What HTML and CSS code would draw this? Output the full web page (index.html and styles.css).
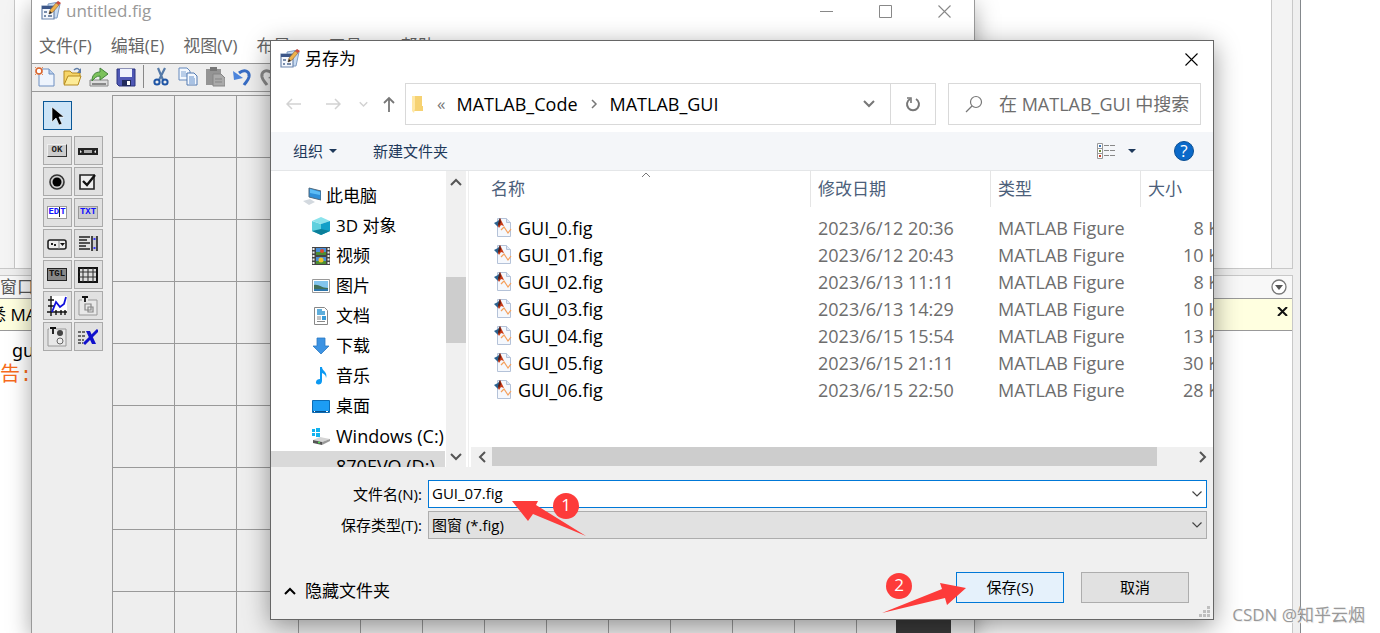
FILE: index.html
```html
<!DOCTYPE html>
<html lang="zh-CN">
<head>
    <meta charset="UTF-8">
    <title>另存为</title>
    <link rel="stylesheet" href="styles.css">
</head>
<body>
    <!-- shared icons -->
    <svg class="defs" width="0" height="0">
        <symbol id="i-guide" viewBox="0 0 20 20">
            <path d="M7 3l11-2 1 2-3 14H8z" fill="#c9dbf1" stroke="#7f9cc4"/>
            <path d="M1 5h12v13H1z" fill="#f4f7fc" stroke="#6d86ad" stroke-width="1.2"/>
            <path d="M1 5h12v3H1z" fill="#3c5688"/>
            <path d="M3 11h3M3 15h2M7 15h4" stroke="#50698f" stroke-width="1.6"/>
            <path d="M8 13l1-4 6-7 3 2-6 7z" fill="#efb24c" stroke="#8b6a46" stroke-width=".7"/>
            <path d="M15 2l2-2 3 2-2 2z" fill="#cf4d3b"/>
            <path d="M8 13l1-3 2 2z" fill="#222"/>
        </symbol>
        <symbol id="i-fig" viewBox="0 0 18 20">
            <path d="M3.500.5h9l4 4v14h-13z" fill="#f5f8fd" stroke="#b4c2d8"/>
            <path d="M12.500.5v4h4" fill="#dfe8f5" stroke="#b4c2d8"/>
            <path d="M7 12l3-3 4 6 3-4" fill="none" stroke="#f5a05c" stroke-width="1.2"/>
            <path d="M0 5l4-2 2-3 1 5-3 4z" fill="#29618f"/>
            <path d="M4 8l2-8 4 8-3-1-2 3z" fill="#c93a16"/>
            <path d="M6 0l1 4-2 4-1-2z" fill="#5a1c15"/>
        </symbol>
        <symbol id="i-down" viewBox="0 0 12 12">
            <path d="M1 3l5 5 5-5" fill="none" stroke="currentColor" stroke-width="2"/>
        </symbol>
        <symbol id="i-thin" viewBox="0 0 12 12">
            <path d="M1.500 3.500L6 8l4.500-4.500" fill="none" stroke="currentColor" stroke-width="1.2"/>
        </symbol>
        <symbol id="i-close" viewBox="0 0 13 13">
            <path d="M.5.5l12 12M12.500.5l-12 12" stroke="currentColor" stroke-width="1.1"/>
        </symbol>
    </svg>

    <div class="desktop">
        <!-- main MATLAB window -->
        <div class="matlab">
            <div class="editor">
                <div class="gutter"></div>
                <div class="code"></div>
                <div class="ruler"></div>
            </div>
            <div class="command">
                <div class="command-title">
                    <span>窗口</span>
                    <svg width="16" height="16" viewBox="0 0 16 16"><circle cx="8" cy="8" r="7" fill="#fff" stroke="#777" stroke-width="1.3"/><path d="M4 6h8l-4 5z" fill="#555"/></svg>
                </div>
                <div class="notice">
                    <span>悉 MATLAB</span>
                    <svg width="11" height="9" viewBox="0 0 11 9"><path d="M1 0l9 9M10 0L1 9" stroke="#111" stroke-width="2"/></svg>
                </div>
                <div class="output">
                    <div class="cmd">guide</div>
                    <div class="warn">告:</div>
                </div>
            </div>
        </div>

        <!-- GUIDE layout editor -->
        <div class="guide">
            <div class="guide-title">
                <svg width="20" height="20"><use href="#i-guide"/></svg>
                <span>untitled.fig</span>
                <div class="win-buttons">
                    <button aria-label="最小化"><svg width="13" height="13"><path d="M0 6.500h13" stroke="#888"/></svg></button>
                    <button aria-label="最大化"><svg width="13" height="13"><path d="M.5.5h12v12H.5z" fill="none" stroke="#888"/></svg></button>
                    <button aria-label="关闭"><svg width="13" height="13"><use href="#i-close"/></svg></button>
                </div>
            </div>
            <div class="guide-menu">
                <button>文件(F)</button>
                <button>编辑(E)</button>
                <button>视图(V)</button>
                <button>布局(L)</button>
                <button>工具(T)</button>
                <button>帮助(H)</button>
            </div>
            <div class="guide-tools">
                <svg viewBox="0 0 20 20"><path d="M4 2h10l5 5v12H4z" fill="#eef4fd" stroke="#6f8fc0"/><path d="M14 2v5h5" fill="#b8cdea" stroke="#6f8fc0"/><circle cx="4" cy="4" r="3" fill="#fff" stroke="#d9622b" stroke-width="1.6"/><path d="M0 0l2 2M8 0L6 2M0 8l2-2M8 8L6 6" stroke="#e58a54"/></svg>
                <svg viewBox="0 0 20 20"><path d="M2 17V4h6l2 2h8v4" fill="#f6d568" stroke="#b58a1e"/><path d="M2 18l4-9h13l-3 9z" fill="#fdeb97" stroke="#b58a1e"/><path d="M12 3c3-3 5-1 6 1" fill="none" stroke="#5d7ba5" stroke-width="1.5"/><path d="M19 1v5h-4z" fill="#5d7ba5"/></svg>
                <svg viewBox="0 0 20 20"><path d="M1 13h18v6H1z" fill="#ddd" stroke="#888"/><path d="M3 17h14" stroke="#888" stroke-width="2"/><path d="M3 14c0-6 3-9 8-9V1l8 6-8 6V9c-4 0-5 2-8 5z" fill="#7cc25b" stroke="#43833a"/></svg>
                <svg viewBox="0 0 20 20"><path d="M1 2h18v17H3l-2-2z" fill="#4f58b5" stroke="#2d347f"/><path d="M4 2h12v8H4z" fill="#eef2fd"/><path d="M6 13h9v6H6z" fill="#222b5b"/><path d="M11 14h3v4h-3z" fill="#fff"/></svg>
                <span class="sep"></span>
                <svg viewBox="0 0 20 20"><path d="M7 1l5 12M14 1L8 13" stroke="#557aa8" stroke-width="2.2"/><circle cx="6" cy="15" r="2.600" fill="none" stroke="#1f55a5" stroke-width="2"/><circle cx="14" cy="15" r="2.600" fill="none" stroke="#1f55a5" stroke-width="2"/></svg>
                <svg viewBox="0 0 20 20"><path d="M1 1h8l3 3v9H1z" fill="#f4f8fe" stroke="#6489bd"/><path d="M3 5h5M3 7h6M3 9h6" stroke="#7fa3d3"/><path d="M9 6h7l3 3v9H9z" fill="#f4f8fe" stroke="#5178b0"/><path d="M11 10h5M11 12h6M11 14h6M11 16h6" stroke="#5f8cc8"/></svg>
                <svg viewBox="0 0 20 20"><path d="M1 2h15v16H1z" fill="#949494"/><path d="M5 0h7v4H5z" fill="#777"/><path d="M8 7h8l4 4v8H8z" fill="#aaa" stroke="#858585"/><path d="M10 12h7M10 15h7" stroke="#858585"/></svg>
                <svg viewBox="0 0 20 20"><path d="M7 6c6-5 11-1 10 4-1 4-3 5-5 8" fill="none" stroke="#376cc4" stroke-width="3"/><path d="M1 4l1 9 9-2z" fill="#4b84dc"/></svg>
                <svg viewBox="0 0 20 20"><path d="M13 6C7 1 2 5 3 10c1 4 3 5 5 8" fill="none" stroke="#888" stroke-width="3"/><path d="M19 4l-1 9-9-2z" fill="#888"/></svg>
            </div>
            <div class="guide-body">
                <div class="palette">
                    <button class="active" aria-label="选择"><svg viewBox="0 0 20 20"><path d="M5 1v15l4-4 3 7 3-1-3-7h5z" fill="#000" stroke="#fff" stroke-width=".6"/></svg></button>
                    <button aria-label="按钮"><span class="tag ok">OK</span></button>
                    <button aria-label="滑动条"><svg viewBox="0 0 20 20"><path d="M0 7h20v7H0z" fill="#222"/><path d="M6 9h8v3H6z" fill="#aaa"/><path d="M2 9v3l2-1zM18 9v3l-2-1z" fill="#eee"/></svg></button>
                    <button aria-label="单选按钮"><svg viewBox="0 0 20 20"><circle cx="10" cy="10" r="7" fill="#ccc" stroke="#333" stroke-width="1.6"/><circle cx="10" cy="10" r="4.500" fill="#000"/></svg></button>
                    <button aria-label="复选框"><svg viewBox="0 0 20 20"><path d="M2 3h14v14H2z" fill="#eee" stroke="#222" stroke-width="1.6"/><path d="M5 9l4 4 8-10" fill="none" stroke="#111" stroke-width="2.400"/></svg></button>
                    <button aria-label="可编辑文本"><span class="tag edit">ED<i></i>T</span></button>
                    <button aria-label="静态文本"><span class="tag txt">TXT</span></button>
                    <button aria-label="弹出式菜单"><svg viewBox="0 0 20 20"><rect x="1" y="6" width="18" height="9" rx="2" fill="#eee" stroke="#222" stroke-width="1.600"/><path d="M4 9h2v2H4zM7 10h2v2H7z" fill="#222"/><path d="M12 7v8" stroke="#888"/><path d="M13 9h5l-2.500 3z" fill="#111"/></svg></button>
                    <button aria-label="列表框"><svg viewBox="0 0 20 20"><path d="M1 3h11M1 6h8M1 9h11M1 12h7M1 15h11" stroke="#222" stroke-width="1.500"/><path d="M14 2h5v15h-5z" fill="#ccc"/><path d="M14 2v15M19 2v15" stroke="#222" stroke-width="1.600"/><path d="M16.500 4v2M16.500 13v2" stroke="#33f" stroke-width="2"/></svg></button>
                    <button aria-label="切换按钮"><span class="tag tgl">TGL</span></button>
                    <button aria-label="表"><svg viewBox="0 0 20 20"><path d="M1 3h18v14H1z" fill="#ddd" stroke="#111" stroke-width="2"/><path d="M5 3v14M10 3v14M15 3v14M1 7h17M1 12h17" stroke="#333" stroke-width="1.100"/></svg></button>
                    <button aria-label="坐标区"><svg viewBox="0 0 20 20"><path d="M3 0h17v17H3z" fill="#fff"/><path d="M4 0v20M0 16h20M1 4h6M1 10h6M9 14v5M14 14v5M18 14v5" stroke="#111" stroke-width="1.400"/><path d="M5 16l4-10 4 5 4-3 2-7" fill="none" stroke="#11d" stroke-width="1.800"/></svg></button>
                    <button aria-label="面板"><svg viewBox="0 0 20 20"><path d="M1 4h18v15H1z" fill="#e8e8e8" stroke="#999"/><path d="M4 0h6v6H4z" fill="#e8e8e8"/><path d="M4 1h6M7 1v5" stroke="#111" stroke-width="1.800"/><path d="M7 8h6v6H7zM10 11h5v5h-5z" fill="none" stroke="#888" stroke-width="1.200"/></svg></button>
                    <button aria-label="按钮组"><svg viewBox="0 0 20 20"><path d="M1 2h18v17H1z" fill="#e8e8e8" stroke="#999"/><path d="M2 0h7v7H2z" fill="#e8e8e8"/><path d="M3 1h6M6 1v6" stroke="#111" stroke-width="1.800"/><circle cx="13" cy="6" r="3" fill="#444"/><circle cx="13" cy="14" r="3" fill="#eee" stroke="#666"/></svg></button>
                    <button aria-label="ActiveX 控件"><svg viewBox="0 0 20 20"><path d="M0 5h7M0 9h7M0 13h6M0 16h5" stroke="#444" stroke-width="1.300" stroke-dasharray="3 1"/><path d="M8 4h4l6 13h-4z" fill="#11c"/><path d="M20 3L6 17" stroke="#11c" stroke-width="3"/></svg></button>
                </div>
                <div class="canvas"><div class="outside"></div></div>
            </div>
        </div>

        <!-- save dialog -->
        <div class="dialog" role="dialog" aria-label="另存为">
            <div class="dialog-title">
                <svg width="20" height="20"><use href="#i-guide"/></svg>
                <span>另存为</span>
                <button class="close" aria-label="关闭"><svg width="13" height="13"><use href="#i-close"/></svg></button>
            </div>

            <div class="address-row">
                <button class="nav-back" aria-label="后退"><svg width="16" height="14" viewBox="0 0 16 14"><path d="M15 7H1M6 2L1 7l5 5" fill="none" stroke="#d2d2d2" stroke-width="1.500"/></svg></button>
                <button class="nav-next" aria-label="前进"><svg width="16" height="14" viewBox="0 0 16 14"><path d="M1 7h14M10 2l5 5-5 5" fill="none" stroke="#d2d2d2" stroke-width="1.500"/></svg></button>
                <button class="nav-recent" aria-label="最近"><svg width="9" height="9"><use href="#i-down"/></svg></button>
                <button class="nav-up" aria-label="上移"><svg width="12" height="16" viewBox="0 0 12 16"><path d="M6 16V2M1 7l5-5 5 5" fill="none" stroke="#777" stroke-width="1.800"/></svg></button>
                <div class="address">
                    <svg width="14" height="18" viewBox="0 0 14 18"><path d="M3 1h8v10h1v5H3z" fill="#f6d272"/><path d="M1 1h3v13l-1 4-2-2z" fill="#ffe8a6"/></svg>
                    <span class="more">«</span>
                    <button>MATLAB_Code</button>
                    <svg class="crumb-sep" width="8" height="10" viewBox="0 0 8 10"><path d="M2 1l4 4-4 4" fill="none" stroke="#777" stroke-width="1.500"/></svg>
                    <button>MATLAB_GUI</button>
                    <button class="drop" aria-label="历史"><svg width="12" height="12"><use href="#i-down"/></svg></button>
                    <button class="refresh" aria-label="刷新"><svg width="16" height="16" viewBox="0 0 16 16"><path d="M11 3a6 6 0 1 1-6 0" fill="none" stroke="#777" stroke-width="2"/><path d="M2 2h4v5" fill="none" stroke="#777" stroke-width="1.600"/></svg></button>
                </div>
                <div class="search">
                    <svg width="18" height="18" viewBox="0 0 18 18"><circle cx="11" cy="7" r="5.500" fill="none" stroke="#777" stroke-width="1.200"/><path d="M7 11l-6 6" stroke="#777" stroke-width="1.300"/></svg>
                    <input type="text" aria-label="搜索" placeholder="在 MATLAB_GUI 中搜索">
                </div>
            </div>

            <div class="toolbar">
                <button class="organize">组织 <i class="caret"></i></button>
                <button>新建文件夹</button>
                <button class="view" aria-label="视图">
                    <svg width="19" height="16" viewBox="0 0 19 16"><path d="M.5.5h5v15h-5zM.5 5.500h5M.5 10.500h5" fill="#fff" stroke="#999"/><path d="M2 2h2v2H2z" fill="#3b74b5"/><path d="M2 7h2v2H2z" fill="#6a8a3a"/><path d="M2 12h2v2H2z" fill="#c5402b"/><path d="M7 2.500h5M13 2.500h5M7 7.500h5M13 7.500h5M7 12.500h5M13 12.500h5" stroke="#888"/></svg>
                    <i class="caret"></i>
                </button>
                <button class="help" aria-label="帮助">?</button>
            </div>

            <div class="browser">
                <ul class="tree">
                    <li class="root"><svg viewBox="0 0 18 18"><path d="M6 1l12 3v9L6 10z" fill="#2f8fd8" stroke="#51687d"/><path d="M7 2l10 3v3L7 6z" fill="#5cbcf5"/><path d="M0 14l7-2 5 3-6 3z" fill="#d3d9df"/></svg><a href="#">此电脑</a></li>
                    <li><svg viewBox="0 0 18 18"><path d="M0 4l9 3v11l-9-4z" fill="#5fd0de"/><path d="M0 4l9-4 9 4-9 3z" fill="#8be3ec"/><path d="M9 7l9-3v10l-9 4z" fill="#12a0c8"/><path d="M0 14l9-2 9 2-9 4z" fill="#0b7f9a"/></svg><a href="#">3D 对象</a></li>
                    <li><svg viewBox="0 0 18 18"><path d="M0 0h18v18H0z" fill="#444"/><path d="M4 1h10v7H4zM4 10h10v7H4z" fill="#4b90d8"/><path d="M4 5h10v3H4zM4 14h10v3H4z" fill="#4c8f33"/><circle cx="10" cy="4" r="2" fill="#d94c2c"/><circle cx="9" cy="13" r="2.500" fill="#f0c52b"/><path d="M1.500 1v16M16.500 1v16" stroke="#eee" stroke-width="2" stroke-dasharray="2 1.500"/></svg><a href="#">视频</a></li>
                    <li><svg viewBox="0 0 18 18"><path d="M.5 2.500h17v13H.5z" fill="#fff" stroke="#999"/><path d="M2 4h14v10H2z" fill="#83c5ee"/><path d="M2 8c5-1 7 3 14 3v3H2z" fill="#41705a"/><path d="M2 12h14v2H2z" fill="#2c75ab"/></svg><a href="#">图片</a></li>
                    <li><svg viewBox="0 0 18 18"><path d="M2.500.5h10l3 3v14h-13z" fill="#fff" stroke="#888"/><path d="M5 3h5M5 5h8M5 7h8" stroke="#2b94d1" stroke-width="1.400"/><path d="M5 10h4M5 12h4M5 14.500h8" stroke="#888"/><path d="M10 9h4v4h-4z" fill="#3a9bd6"/></svg><a href="#">文档</a></li>
                    <li><svg viewBox="0 0 18 18"><path d="M5 1h8v8h4l-8 8-8-8h4z" fill="#3c93e3" stroke="#2b78c2" stroke-width=".8"/></svg><a href="#">下载</a></li>
                    <li><svg viewBox="0 0 18 18"><path d="M8 0h2c0 4 6 5 4 11 0-3-2-4-4-5v8c0 5-7 4-6 1 0-2 2-3 4-3z" fill="#0c99f2"/></svg><a href="#">音乐</a></li>
                    <li><svg viewBox="0 0 18 18"><path d="M.5 3.500h17v12H.5z" fill="#1c9df4" stroke="#0c6cb5"/><path d="M1 14.500h16" stroke="#094f8a"/><path d="M2 14.500h1M14 14.500h2" stroke="#fff"/></svg><a href="#">桌面</a></li>
                    <li class="drive"><svg viewBox="0 0 18 18"><path d="M0 2h3v3H0zM4 1h4v4H4zM0 6h3v3H0zM4 6h4v4H4z" fill="#13b3ef"/><path d="M1 13l7-3 10 2-8 3z" fill="#d5d5d5"/><path d="M1 13l9 2v3l-9-2z" fill="#555"/><path d="M10 15l8-3v2l-8 4z" fill="#999"/><path d="M6 15.500h2" stroke="#4fdc4f" stroke-width="1.500"/></svg><a href="#">Windows (C:)</a></li>
                    <li class="drive selected"><svg viewBox="0 0 18 18"><path d="M3 16l6-3 6 1v4H3z" fill="#e2e2e2"/></svg><a href="#">870EVO (D:)</a></li>
                </ul>
                <div class="vscroll">
                    <button aria-label="向上"><svg class="flip" width="12" height="12"><use href="#i-down"/></svg></button>
                    <div class="thumb"></div>
                    <button aria-label="向下"><svg width="12" height="12"><use href="#i-down"/></svg></button>
                </div>
                <div class="files">
                    <div class="table-wrap">
                        <table>
                            <thead>
                                <tr>
                                    <th class="c-name">名称<svg class="sort" width="10" height="6" viewBox="0 0 10 6"><path d="M1 5l4-4 4 4" fill="none" stroke="#777"/></svg></th>
                                    <th class="c-date">修改日期</th>
                                    <th class="c-type">类型</th>
                                    <th class="c-size">大小</th>
                                </tr>
                            </thead>
                            <tbody>
                                <tr><td><svg width="18" height="20"><use href="#i-fig"/></svg>GUI_0.fig</td><td>2023/6/12 20:36</td><td>MATLAB Figure</td><td>8 KB</td></tr>
                                <tr><td><svg width="18" height="20"><use href="#i-fig"/></svg>GUI_01.fig</td><td>2023/6/12 20:43</td><td>MATLAB Figure</td><td>10 KB</td></tr>
                                <tr><td><svg width="18" height="20"><use href="#i-fig"/></svg>GUI_02.fig</td><td>2023/6/13 11:11</td><td>MATLAB Figure</td><td>8 KB</td></tr>
                                <tr><td><svg width="18" height="20"><use href="#i-fig"/></svg>GUI_03.fig</td><td>2023/6/13 14:29</td><td>MATLAB Figure</td><td>10 KB</td></tr>
                                <tr><td><svg width="18" height="20"><use href="#i-fig"/></svg>GUI_04.fig</td><td>2023/6/15 15:54</td><td>MATLAB Figure</td><td>13 KB</td></tr>
                                <tr><td><svg width="18" height="20"><use href="#i-fig"/></svg>GUI_05.fig</td><td>2023/6/15 21:11</td><td>MATLAB Figure</td><td>30 KB</td></tr>
                                <tr><td><svg width="18" height="20"><use href="#i-fig"/></svg>GUI_06.fig</td><td>2023/6/15 22:50</td><td>MATLAB Figure</td><td>28 KB</td></tr>
                            </tbody>
                        </table>
                    </div>
                    <div class="hscroll">
                        <button aria-label="向左"><svg class="left" width="12" height="12"><use href="#i-down"/></svg></button>
                        <div class="track"><div class="thumb"></div></div>
                        <button aria-label="向右"><svg class="right" width="12" height="12"><use href="#i-down"/></svg></button>
                    </div>
                </div>
            </div>

            <div class="fields">
                <label for="filename">文件名(N):</label>
                <div class="combo">
                    <input type="text" id="filename" value="GUI_07.fig">
                    <svg width="12" height="12"><use href="#i-thin"/></svg>
                </div>
                <label for="filetype">保存类型(T):</label>
                <div class="combo">
                    <select id="filetype"><option>图窗 (*.fig)</option></select>
                    <svg width="12" height="12"><use href="#i-thin"/></svg>
                </div>
            </div>

            <div class="actions">
                <button class="hide-folders"><svg class="flip" width="12" height="12"><use href="#i-down"/></svg>隐藏文件夹</button>
                <button class="btn primary">保存(S)</button>
                <button class="btn">取消</button>
            </div>
            <svg class="grip" width="12" height="12"><path d="M8 0h3v3H8zM4 4h3v3H4zM8 4h3v3H8zM0 8h3v3H0zM4 8h3v3H4zM8 8h3v3H8z" fill="#bfbfbf"/></svg>

            <!-- step markers -->
            <div class="step step-1">
                <svg width="74" height="36"><path d="M0 1h26l-2 4 50 31-53-22-5 7z" fill="#fd3b3a"/></svg>
                <span>1</span>
            </div>
            <div class="step step-2">
                <svg width="84" height="31"><path d="M84 6L58 1l2 6L0 31l63-15 2 7z" fill="#fd3b3a"/></svg>
                <span>2</span>
            </div>
        </div>

        <div class="watermark">CSDN @知乎云烟</div>
    </div>
</body>
</html>
```
FILE: styles.css
```css
* {
    box-sizing: border-box;
}
body {
    margin: 0;
    font-family: "Open Sans", "Noto Sans CJK SC", sans-serif;
    font-size: 17px;
    line-height: 24px;
    color: #000;
    background: #fff;
}
button {
    display: flex;
    align-items: center;
    justify-content: center;
    padding: 0;
    border: none;
    background: none;
    font: inherit;
    color: inherit;
    white-space: nowrap;
}
svg {
    flex: none;
    display: block;
}
.defs {
    position: absolute;
}
.desktop {
    position: relative;
    height: 100vh;
    min-height: 633px;
    overflow: hidden;
}

/* main MATLAB window */
.matlab {
    display: flex;
    flex-direction: column;
    gap: 6px;
    height: 100%;
    margin-right: 79px;
    padding-right: 7px;
    background: #efefef;
    border-right: 1px solid #84888c;
}
.editor {
    display: flex;
    flex: none;
    height: 269px;
    border: 1px solid #c8c8c8;
    border-width: 0 1px 1px 0;
}
.gutter {
    width: 15px;
    background: #f4f4f4;
    border-right: 1px solid #c8c8c8;
}
.code {
    flex: 1;
    background: #fff;
}
.ruler {
    width: 21px;
    background: #f3f3f3;
    border-left: 1px solid #c8c8c8;
}
.command {
    flex: 1;
    border: 1px solid #c8c8c8;
    border-width: 1px 1px 0 0;
    background: #fff;
}
.command-title, .notice {
    display: flex;
    align-items: center;
    justify-content: space-between;
    border-bottom: 1px solid #999;
}
.command-title {
    height: 23px;
    padding-right: 5px;
    background: #f8f8f8;
    color: #555;
}
.notice {
    height: 32px;
    padding-right: 4px;
    background: #ffffe0;
}
.notice span {
    margin-left: -11px;
}
.notice svg {
    align-self: flex-start;
    margin-top: 8px;
}
.output {
    padding-top: 6px;
    font-family: "Liberation Mono", "Noto Sans CJK SC", monospace;
    font-size: 20px;
    line-height: 26px;
}
.cmd {
    padding-left: 12px;
    font-family: "Noto Sans", sans-serif;
    font-size: 18px;
}
.warn {
    color: #f76b1c;
}

/* GUIDE window */
.guide {
    position: absolute;
    top: 0;
    bottom: 0;
    left: 31px;
    width: 944px;
    display: flex;
    flex-direction: column;
    background: #fff;
    border: 1px solid #999;
    border-width: 0 1px;
    box-shadow: 0 6px 22px rgba(0, 0, 0, 0.35);
    color: #666;
}
.guide-title {
    display: flex;
    align-items: center;
    gap: 5px;
    height: 22px;
    margin-bottom: 6px;
    padding: 0 23px 0 9px;
    color: #999;
}
.win-buttons {
    display: flex;
    gap: 46px;
    margin-left: auto;
    color: #888;
}
.guide-menu {
    display: flex;
    gap: 19px;
    height: 35px;
    padding-left: 7px;
}
.guide-tools {
    display: flex;
    align-items: center;
    gap: 7px;
    height: 29px;
    padding: 0 0 2px 3px;
    background: #eee;
    border: 1px solid #999;
    border-width: 1px 0;
}
.guide-tools svg {
    width: 20px;
    height: 20px;
}
.sep {
    width: 1px;
    height: 23px;
    background: #888;
}
.guide-body {
    display: flex;
    flex: 1;
    gap: 9px;
    padding: 3px 23px 0 11px;
    background: #eee;
}
.palette {
    display: grid;
    grid-template-columns: 29px 29px;
    grid-template-rows: 33px;
    grid-auto-rows: 29px;
    gap: 2px;
    padding-top: 6px;
}
.palette button {
    padding-right: 1px;
    border: 1px solid #aaa;
    background: #e1e1e1;
}
.palette .active {
    grid-column: 1 / 3;
    width: 29px;
    height: 29px;
    border-color: #0a5796;
    background: #cce4f7;
}
.palette svg {
    width: 20px;
    height: 20px;
}
.tag {
    width: 20px;
    height: 13px;
    border: 1px solid #999;
    font: bold 9px/11px "Liberation Mono", monospace;
    color: #11f;
}
.tag.ok {
    border-color: #eee #333 #333 #eee;
    background: #ccc;
    color: #222;
}
.tag.edit {
    background: #fff;
}
.tag.edit i {
    display: inline-block;
    width: 1px;
    height: 10px;
    vertical-align: middle;
    background: #222;
}
.tag.txt {
    background: #ccc;
}
.tag.tgl {
    border-color: #222;
    background: #888;
    color: #111;
}
.canvas {
    display: flex;
    flex: 1;
    align-items: flex-end;
    justify-content: flex-end;
    background-image: linear-gradient(#999 1px, transparent 1px), linear-gradient(90deg, #999 1px, transparent 1px);
    background-size: 62px 62px;
}
.outside {
    width: 55px;
    height: 24px;
    background: #3a3a3a;
}

/* save dialog */
.dialog {
    position: absolute;
    top: 40px;
    left: 270px;
    width: 944px;
    background: #f0f0f0;
    border: 1px solid #666;
    box-shadow: 0 6px 24px rgba(0, 0, 0, 0.4);
}
.dialog-title {
    display: flex;
    align-items: center;
    gap: 5px;
    height: 42px;
    padding: 0 15px 6px 9px;
    background: #fff;
}
.close {
    margin-left: auto;
}
.address-row {
    display: flex;
    padding: 0 12px 7px 4px;
    background: #fff;
}
.nav-back {
    width: 38px;
}
.nav-next {
    width: 40px;
}
.nav-recent {
    width: 20px;
    color: #d2d2d2;
}
.nav-up {
    width: 32px;
}
.address, .search {
    display: flex;
    align-items: center;
    height: 42px;
    border: 1px solid #d9d9d9;
    font-size: 18px;
}
.address {
    flex: 1;
    padding-left: 5px;
}
.more {
    margin: 0 11px 0 12px;
    font-size: 17px;
    color: #777;
}
.crumb-sep {
    margin: 0 12px;
}
.drop {
    width: 42px;
    margin-left: auto;
    color: #777;
}
.refresh {
    width: 45px;
    height: 100%;
    border-left: 1px solid #d9d9d9;
}
.search {
    width: 253px;
    margin-left: 12px;
    padding-left: 16px;
    gap: 16px;
}
.search input {
    flex: 1;
    min-width: 0;
    padding: 0;
    border: none;
    outline: none;
    font: inherit;
}
.search input::placeholder {
    color: #6d6d6d;
    opacity: 1;
}
.toolbar {
    display: flex;
    align-items: center;
    gap: 36px;
    height: 39px;
    padding: 0 19px 0 22px;
    background: #f4f6f9;
    border-bottom: 1px solid #e4e6e8;
    font-size: 15px;
    color: #1e395b;
}
.organize {
    gap: 6px;
}
.caret {
    border: 4px solid transparent;
    border-top-color: #1e395b;
    border-bottom: none;
}
.view {
    gap: 12px;
    margin-left: auto;
    padding-right: 2px;
}
.help {
    width: 20px;
    height: 20px;
    border: 1px solid #0a4f94;
    border-radius: 50%;
    background: #0a69c9;
    font-size: 17px;
    color: #fff;
}

/* folder tree and file list */
.browser {
    display: flex;
    height: 296px;
    background: #fff;
}
.tree {
    width: 174px;
    margin: 0;
    padding: 10px 0 0;
    overflow: hidden;
    list-style: none;
}
.tree li {
    display: flex;
    align-items: center;
    gap: 6px;
    height: 30px;
    padding-left: 41px;
    white-space: nowrap;
}
.tree .root {
    padding-left: 32px;
    gap: 5px;
}
.tree .drive {
    font-size: 18px;
}
.tree .selected {
    background: #d9d9d9;
}
.tree svg {
    width: 18px;
    height: 18px;
}
.tree a {
    color: #000;
    text-decoration: none;
}
.vscroll {
    display: flex;
    flex-direction: column;
    width: 20px;
    margin-left: 1px;
    background: #f0f0f0;
    color: #555;
}
.vscroll button {
    height: 21px;
}
.vscroll button:last-child {
    margin-top: auto;
}
.vscroll .thumb {
    height: 66px;
    margin-top: 85px;
    background: #cdcdcd;
}
.flip {
    transform: rotate(180deg);
}
.left {
    transform: rotate(90deg);
}
.right {
    transform: rotate(-90deg);
}
.files {
    display: flex;
    flex: 1;
    flex-direction: column;
    min-width: 0;
    margin-left: 2px;
    padding-left: 2px;
    border-left: 1px solid #eee;
}
.table-wrap {
    flex: 1;
    overflow: hidden;
}
table {
    width: 769px;
    table-layout: fixed;
    border-collapse: separate;
    border-spacing: 0;
    color: #6d6d6d;
}
th {
    position: relative;
    height: 36px;
    padding: 0 0 0 7px;
    border-right: 1px solid #e5e5e5;
    font-weight: normal;
    text-align: left;
    color: #4c607a;
}
.c-name {
    width: 340px;
    padding-left: 20px;
}
.c-date {
    width: 180px;
}
.c-type {
    width: 150px;
}
.sort {
    position: absolute;
    top: 1px;
    left: 50%;
}
tbody::before {
    content: "";
    display: block;
    height: 7px;
}
td {
    height: 27px;
    padding: 0 9px 0 7px;
    font-size: 18px;
    white-space: nowrap;
}
td:first-child {
    padding-left: 23px;
    color: #000;
}
td:last-child {
    text-align: right;
}
td svg {
    display: inline-block;
    margin-right: 6px;
    vertical-align: -3px;
}
.hscroll {
    display: flex;
    height: 20px;
    background: #f0f0f0;
    color: #555;
}
.hscroll button {
    width: 21px;
}
.track {
    flex: 1;
    padding-bottom: 1px;
}
.track .thumb {
    width: 95%;
    height: 100%;
    background: #cdcdcd;
}

/* file name, type and buttons */
.fields {
    display: grid;
    grid-template-columns: 151px 1fr;
    gap: 3px 6px;
    align-items: center;
    padding: 13px 6px 0 0;
    font-size: 15px;
}
.fields label {
    text-align: right;
}
.combo {
    position: relative;
}
.combo input, .combo select {
    display: block;
    width: 100%;
    height: 28px;
    padding: 0 3px;
    border: 1px solid #0078d7;
    border-radius: 0;
    outline: none;
    appearance: none;
    background: #fff;
    font: inherit;
    color: #000;
}
.combo input {
    padding-bottom: 2px;
}
.combo select {
    border-color: #adadad;
    background: #e1e1e1;
}
.combo svg {
    position: absolute;
    top: 8px;
    right: 4px;
    color: #444;
}
.actions {
    display: flex;
    align-items: center;
    gap: 17px;
    padding: 33px 24px 16px 13px;
}
.hide-folders {
    gap: 9px;
    margin-right: auto;
    padding-top: 6px;
}
.btn {
    width: 108px;
    height: 31px;
    padding-bottom: 2px;
    border: 1px solid #adadad;
    background: #e1e1e1;
    font-size: 15px;
}
.btn.primary {
    border-color: #0078d7;
    background: #e5f1fb;
}
.grip {
    position: absolute;
    right: 2px;
    bottom: 1px;
}

/* numbered arrows */
.step {
    position: absolute;
}
.step span {
    position: absolute;
    width: 26px;
    height: 26px;
    border-radius: 50%;
    background: #fd3b3a;
    font-size: 17px;
    line-height: 24px;
    text-align: center;
    color: #fff;
}
.step-1 {
    top: 459px;
    left: 241px;
}
.step-1 span {
    top: -7px;
    left: 41px;
}
.step-2 {
    top: 541px;
    left: 611px;
}
.step-2 span {
    top: -9px;
    left: 4px;
}
.watermark {
    position: absolute;
    right: 15px;
    bottom: 6px;
    color: #999;
    text-shadow: 1px 1px 0 #eee;
}
```
